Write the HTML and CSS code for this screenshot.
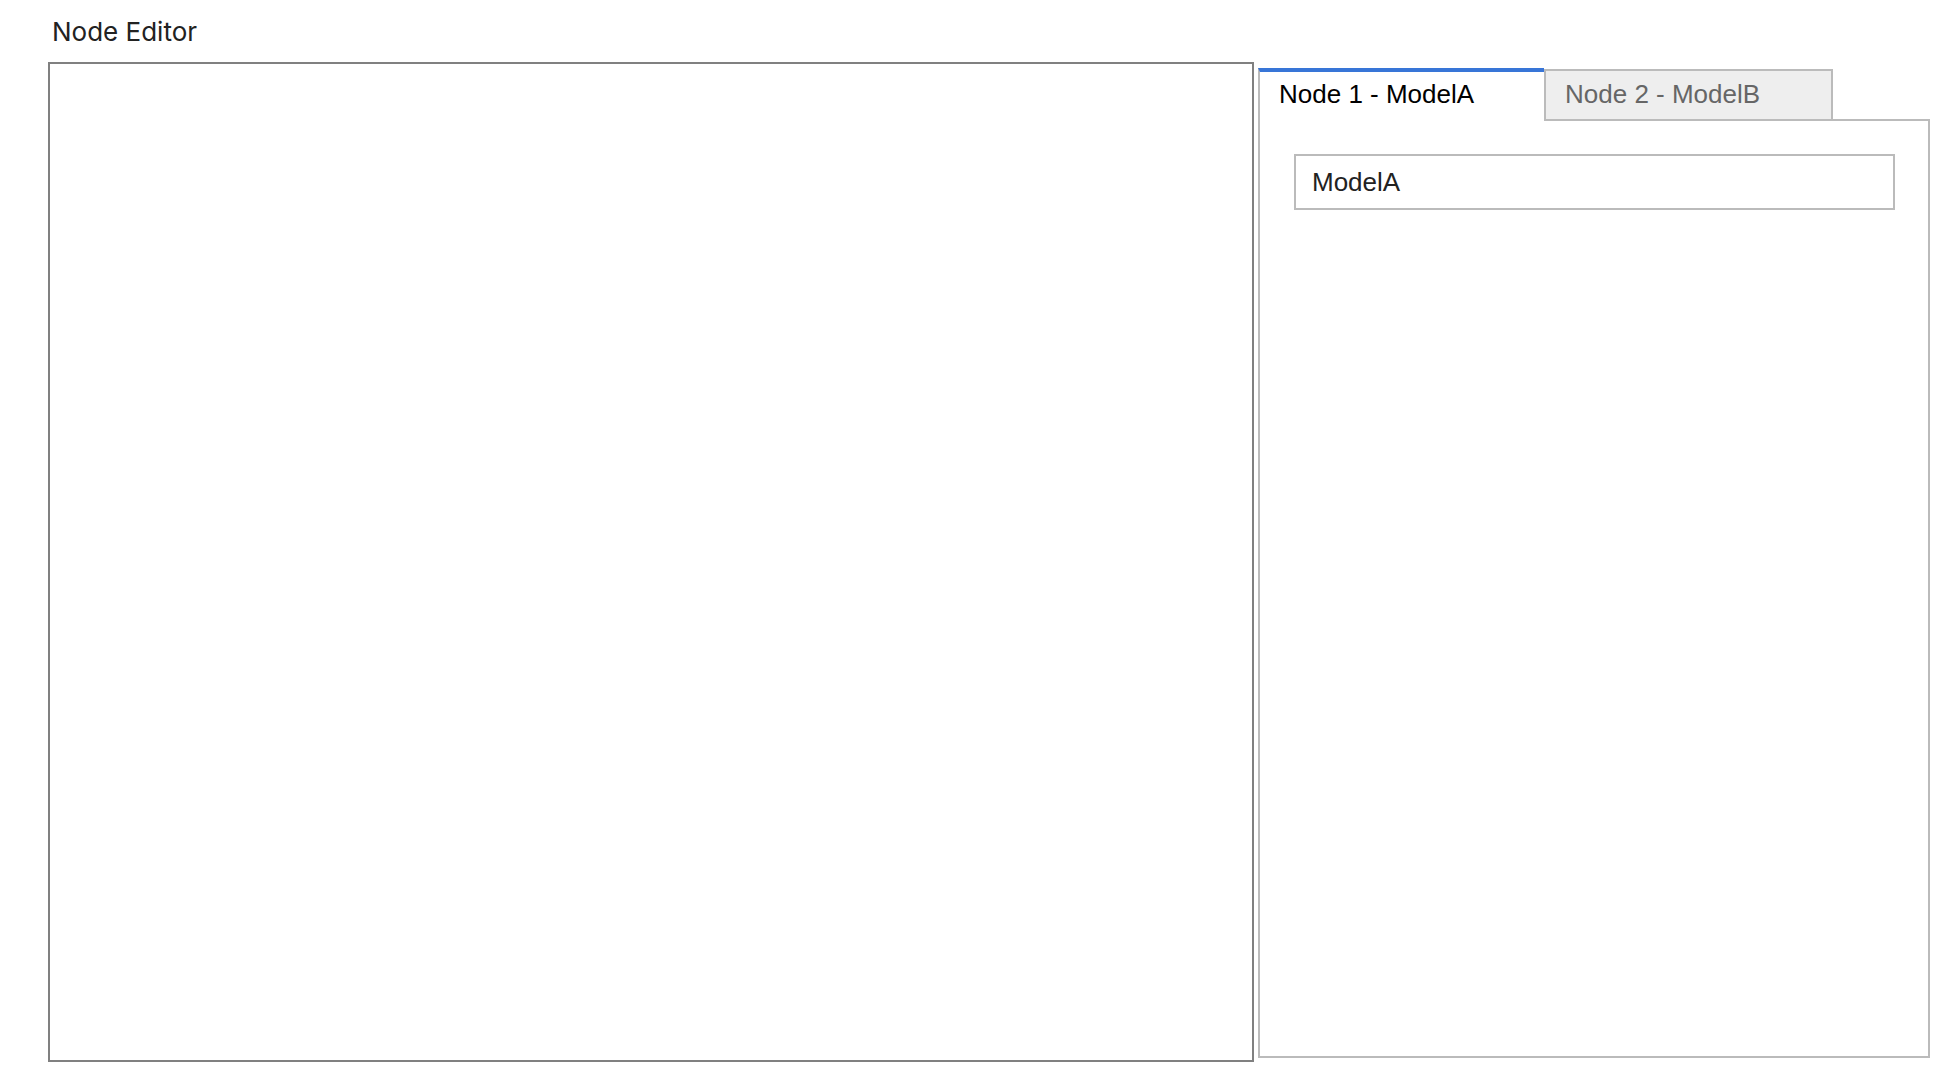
FILE: index.html
```html
<!DOCTYPE html>
<html>
 <head>
  <title>Node Editor</title>
  <link rel="stylesheet" href="styles.css">
 </head>
 <body>
  <div id="content">
   <h1 class="title">Node Editor</h1>
   <div class="workspace">
    <div class="canvas"></div>
    <div class="inspector">
     <div class="tabs">
      <div class="tab active">Node 1 - ModelA</div>
      <div class="tab">Node 2 - ModelB</div>
      <div class="tab-rest"></div>
     </div>
     <div class="tab-body">
      <input type="text" class="model-input" value="ModelA" />
     </div>
    </div>
   </div>
  </div>
 </body>
</html>
```

FILE: styles.css
```css
body {
 margin:      0;
 font-family: "Liberation Sans", Arial, sans-serif;
 background:  #ffffff;
}

#content {
 padding: 17px 26px 0 48px;
}

.title {
 margin:      0 0 15px 4px;
 font-family: Inter, "Liberation Sans", sans-serif;
 font-size:   26px;
 font-weight: normal;
 line-height: 30px;
 color:       #222222;
}

.workspace {
 display:     flex;
 align-items: flex-start;
 gap:         4px;
}

.canvas {
 box-sizing: border-box;
 width:      1206px;
 height:     1000px;
 border:     2px solid #808080;
}

.inspector {
 width:      672px;
 margin-top: 6px;
}

.tabs {
 display:     flex;
 align-items: flex-end;
}

.tab {
 box-sizing:  border-box;
 width:       289px;
 height:      52px;
 padding:     0 19px;
 border:      2px solid #bbbbbb;
 background:  #eeeeee;
 color:       #666666;
 font-size:   26px;
 line-height: 46px;
 white-space: nowrap;
}

.tab.active {
 width:         286px;
 height:        53px;
 border:        0;
 border-left:   2px solid #bbbbbb;
 border-top:    4px solid #3875d7;
 background:    #ffffff;
 color:         #000000;
 line-height:   44px;
}

.tab-rest {
 flex:       1;
 height:     2px;
 background: #bbbbbb;
}

.tab-body {
 box-sizing: border-box;
 height:     937px;
 padding:    33px 33px 0 34px;
 border:     2px solid #bbbbbb;
 border-top: 0;
}

.model-input {
 box-sizing:  border-box;
 width:       100%;
 height:      56px;
 margin:      0;
 padding:     0 16px;
 border:      2px solid #bbbbbb;
 border-radius: 0;
 outline:     none;
 font-family: "Liberation Sans", Arial, sans-serif;
 font-size:   26px;
 color:       #222222;
}
```
